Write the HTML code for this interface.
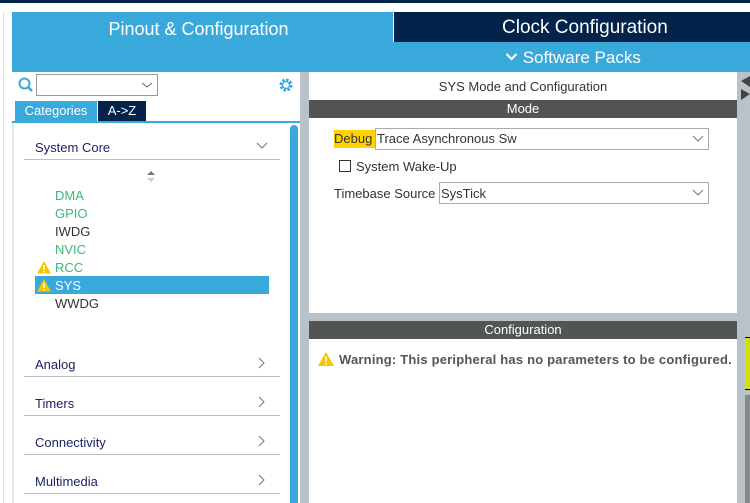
<!DOCTYPE html>
<html><head><style>
*{margin:0;padding:0;box-sizing:border-box}
body{width:750px;height:503px;overflow:hidden;background:#fff;font-family:"Liberation Sans",Arial,sans-serif;position:relative}
.a{position:absolute}
.item{position:absolute;left:35px;font-size:13px;color:#1d2366}
.line{position:absolute;left:24px;width:256px;height:1px;background:#b8c2c8}
.p{position:absolute;left:55px;font-size:13px}
</style></head><body>
<div class="a" style="left:0;top:0;width:750px;height:3px;background:#03234b"></div>
<div class="a" style="left:3px;top:12px;width:1px;height:491px;background:#ddd"></div>
<div class="a" style="left:12px;top:12px;width:381px;height:60px;background:#39a9dc"></div>
<div class="a" style="left:12px;top:18px;width:381px;text-align:center;font-size:18px;color:#fff;line-height:22px"><span style="position:relative;left:-4px">Pinout &amp; Configuration</span></div>
<div class="a" style="left:394px;top:12px;width:356px;height:30px;background:#03234b;color:#fff;font-size:19px;line-height:32px"><span style="position:absolute;left:108px;white-space:nowrap">Clock Configuration</span></div>
<div class="a" style="left:393px;top:42px;width:357px;height:30px;background:#39a9dc;color:#fff;font-size:17px;line-height:32px"><span style="position:absolute;left:112px;white-space:nowrap"><svg width="13" height="10" style="vertical-align:1px"><path d="M1.5 2L6.5 7L11.5 2" fill="none" stroke="#fff" stroke-width="2.2"/></svg> Software Packs</span></div>
<svg class="a" style="left:18px;top:77px" width="16" height="17"><circle cx="6.5" cy="6.5" r="5" fill="none" stroke="#39a9dc" stroke-width="2"/><line x1="10" y1="10" x2="14" y2="14" stroke="#39a9dc" stroke-width="2.5"/></svg>
<div class="a" style="left:36px;top:74px;width:122px;height:22px;border:1px solid #999"></div>
<svg class="a" style="left:141px;top:81px" width="12" height="8"><path d="M1 2L6 6L11 2" fill="none" stroke="#666"/></svg>
<svg class="a" style="left:277px;top:76px" width="18" height="18"><circle cx="9" cy="9" r="5" fill="none" stroke="#39a9dc" stroke-width="3" stroke-dasharray="2.5 1.4"/><circle cx="9" cy="9" r="3.5" fill="none" stroke="#39a9dc" stroke-width="1.3"/></svg>
<div class="a" style="left:15px;top:101px;width:82px;height:20px;background:#39a9dc;color:#fff;font-size:13px;text-align:center;line-height:20px">Categories</div>
<div class="a" style="left:98px;top:101px;width:48px;height:20px;background:#03234b;color:#fff;font-size:13px;text-align:center;line-height:20px">A-&gt;Z</div>
<div class="a" style="left:12px;top:121px;width:288px;height:2px;background:#39a9dc"></div>
<div class="a" style="left:12px;top:123px;width:2px;height:380px;background:#e8e8e8"></div>
<div class="a" style="left:290px;top:125px;width:8px;height:378px;background:#39a9dc;border-radius:4px 4px 0 0"></div>
<div class="a" style="left:300px;top:72px;width:450px;height:431px;background:#b8c2c8"></div>
<div class="item" style="top:140px">System Core</div>
<svg class="a" style="left:256px;top:142px" width="12" height="8"><path d="M1 1L6 6L11 1" fill="none" stroke="#777"/></svg>
<div class="line" style="top:159px"></div>
<svg class="a" style="left:146px;top:171px" width="10" height="12"><path d="M1 4L5 0L9 4Z" fill="#777"/><path d="M1 7L5 11L9 7Z" fill="#ccc"/></svg>
<div class="p" style="top:188px;color:#3cb878">DMA</div>
<div class="p" style="top:206px;color:#3cb878">GPIO</div>
<div class="p" style="top:224px;color:#333">IWDG</div>
<div class="p" style="top:242px;color:#3cb878">NVIC</div>
<div class="p" style="top:260px;color:#3cb878">RCC</div>
<div class="a" style="left:35px;top:276px;width:234px;height:18px;background:#39a9dc"></div>
<div class="p" style="top:278px;color:#fff">SYS</div>
<div class="p" style="top:296px;color:#333">WWDG</div>
<svg class="a" style="left:37px;top:261px" width="14" height="13"><path d="M7 0L14 12.5H0Z" fill="#f7c600"/><rect x="6.3" y="4" width="1.4" height="5" fill="#fff"/><rect x="6.3" y="10" width="1.4" height="1.4" fill="#fff"/></svg>
<svg class="a" style="left:37px;top:279px" width="14" height="13"><path d="M7 0L14 12.5H0Z" fill="#f7c600"/><rect x="6.3" y="4" width="1.4" height="5" fill="#fff"/><rect x="6.3" y="10" width="1.4" height="1.4" fill="#fff"/></svg>
<div class="item" style="top:357px">Analog</div><svg class="a" style="left:258px;top:357px" width="8" height="12"><path d="M1 1L6 6L1 11" fill="none" stroke="#777"/></svg><div class="line" style="top:376px"></div>
<div class="item" style="top:396px">Timers</div><svg class="a" style="left:258px;top:396px" width="8" height="12"><path d="M1 1L6 6L1 11" fill="none" stroke="#777"/></svg><div class="line" style="top:415px"></div>
<div class="item" style="top:435px">Connectivity</div><svg class="a" style="left:258px;top:435px" width="8" height="12"><path d="M1 1L6 6L1 11" fill="none" stroke="#777"/></svg><div class="line" style="top:454px"></div>
<div class="item" style="top:474px">Multimedia</div><svg class="a" style="left:258px;top:474px" width="8" height="12"><path d="M1 1L6 6L1 11" fill="none" stroke="#777"/></svg><div class="line" style="top:493px"></div>
<div class="a" style="left:309px;top:72px;width:428px;height:241px;background:#fff"></div>
<div class="a" style="left:309px;top:79px;width:428px;text-align:center;font-size:13px;color:#333">SYS Mode and Configuration</div>
<div class="a" style="left:309px;top:100px;width:428px;height:18px;background:#535553;color:#fff;font-size:13px;text-align:center;line-height:18px">Mode</div>
<div class="a" style="left:334px;top:130px;width:41px;height:18px;background:#ffd200"></div>
<div class="a" style="left:334px;top:131px;font-size:13px;color:#333">Debug</div>
<div class="a" style="left:375px;top:128px;width:334px;height:22px;border:1px solid #aaa;font-size:13px;color:#333;padding:2px 1px">Trace Asynchronous Sw</div>
<svg class="a" style="left:692px;top:135px" width="12" height="8"><path d="M1 1L6 6L11 1" fill="none" stroke="#777"/></svg>
<div class="a" style="left:339px;top:160px;width:12px;height:12px;border:1px solid #333"></div>
<div class="a" style="left:356px;top:159px;font-size:13px;color:#333">System Wake-Up</div>
<div class="a" style="left:334px;top:186px;font-size:13px;color:#333">Timebase Source</div>
<div class="a" style="left:439px;top:182px;width:270px;height:22px;border:1px solid #aaa;font-size:13px;color:#333;padding:3px 1px">SysTick</div>
<svg class="a" style="left:692px;top:189px" width="12" height="8"><path d="M1 1L6 6L11 1" fill="none" stroke="#777"/></svg>
<div class="a" style="left:309px;top:321px;width:428px;height:182px;background:#fff"></div>
<div class="a" style="left:309px;top:321px;width:428px;height:18px;background:#535553;color:#fff;font-size:13px;text-align:center;line-height:18px">Configuration</div>
<svg class="a" style="left:318px;top:352px" width="16" height="14"><path d="M8 0L16 14H0Z" fill="#f7c600"/><rect x="7.2" y="4.5" width="1.6" height="5.5" fill="#fff"/><rect x="7.2" y="11" width="1.6" height="1.6" fill="#fff"/></svg>
<div class="a" style="left:339px;top:352px;font-size:13px;font-weight:bold;color:#555;letter-spacing:0.2px;white-space:nowrap">Warning: This peripheral has no parameters to be configured.</div>
<svg class="a" style="left:738px;top:73px" width="12" height="30"><path d="M12 3L3 8L12 14Z" fill="#444"/><path d="M3 16L12 21L3 27Z" fill="#444"/></svg>
<div class="a" style="left:745px;top:337px;width:5px;height:53px;background:#d4e000;border-top:1px solid #000;border-bottom:1px solid #000"></div>
<div class="a" style="left:745px;top:395px;width:5px;height:108px;background:#888"></div>
</body></html>
